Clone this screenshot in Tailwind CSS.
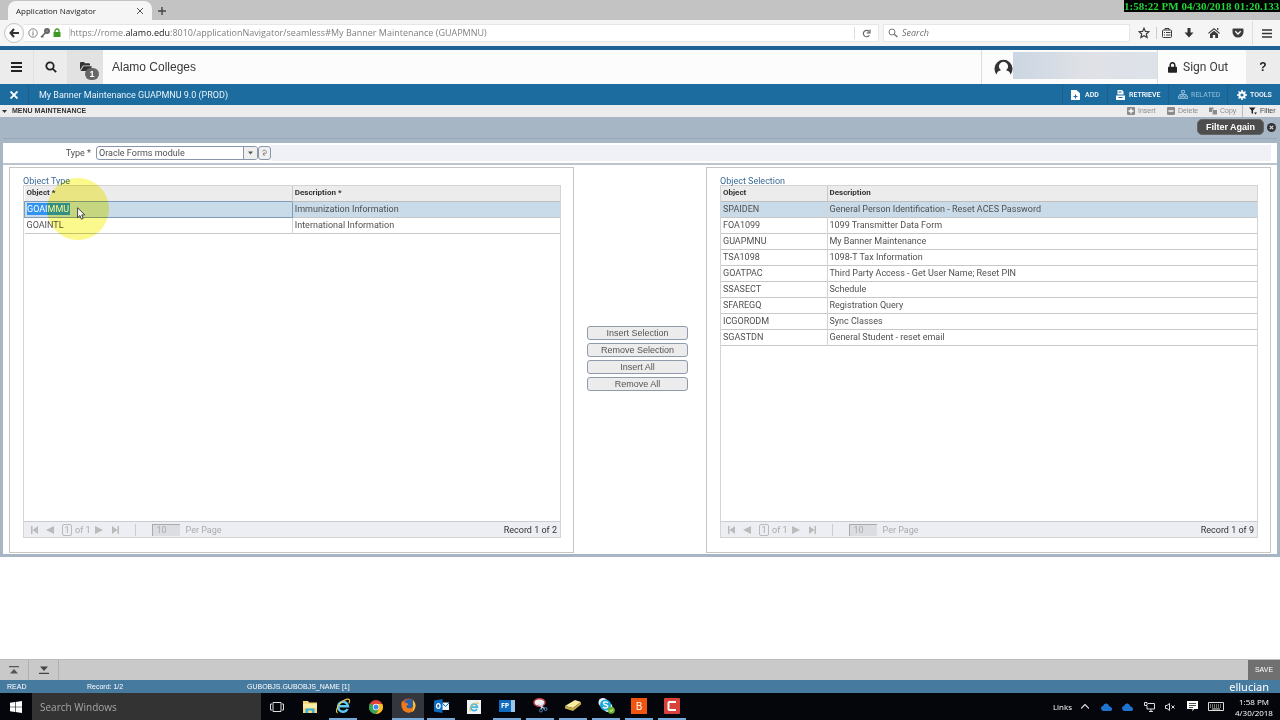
<!DOCTYPE html>
<html lang="en">
<head>
    <meta charset="UTF-8">
    <meta name="viewport" content="width=device-width, initial-scale=1.0">
    <title>Application Navigator</title>
    <script src="https://cdn.jsdelivr.net/npm/@tailwindcss/browser@4"></script>
</head>
<body class="min-h-screen flex flex-col bg-white font-['Liberation_Sans',Arial,sans-serif] text-[9px] leading-3 text-[#4a4a4a]">

    <!-- Browser tabs -->
    <div class="relative h-5 bg-[#c3c3c3] flex items-end font-['Open_Sans','Noto_Sans',sans-serif]">
        <div class="ml-2 h-[19px] w-[144px] bg-[#f5f5f5] rounded-t-lg flex items-center justify-between pl-2 pr-2 text-[8px] text-[#222]">
            <span>Application Navigator</span>
            <button aria-label="Close tab"><svg class="w-2 h-2" viewBox="0 0 8 8" stroke="#555" fill="none"><path d="M1 1l6 6M7 1L1 7"/></svg></button>
        </div>
        <button aria-label="New tab" class="ml-[6px] mb-[5px]"><svg class="w-2 h-2" viewBox="0 0 8 8" stroke="#444" stroke-width="1.4"><path d="M4 0v8M0 4h8"/></svg></button>
        <div class="absolute right-0 top-0 h-3 w-[156px] bg-black text-[#22d63a] font-bold text-[11px] leading-3 whitespace-nowrap font-['Liberation_Serif',serif]">1:58:22 PM 04/30/2018 01:20.133</div>
    </div>

    <!-- Address bar -->
    <div class="h-[26px] bg-[#f5f5f5] flex items-center font-['Open_Sans','Noto_Sans',sans-serif] text-[#808080]">
        <button aria-label="Back" class="ml-1 w-5 h-5 rounded-full border border-[#c4c4c4] bg-[#fbfbfb] flex items-center justify-center shrink-0">
            <svg class="w-[10px] h-[10px]" viewBox="0 0 10 10" fill="none" stroke="#333" stroke-width="2"><path d="M5 1L1.500 5L5 9M2 5h8"/></svg>
        </button>
        <div class="flex-1 h-[18px] bg-white border-y border-r border-[#e6e6e6] flex items-center">
            <svg class="ml-1 w-[10px] h-[10px]" viewBox="0 0 10 10" fill="none" stroke="#777" stroke-width=".9"><circle cx="5" cy="5" r="4.200"/><path d="M5 4.300v3.200M5 2.400v1" stroke-width="1.100"/></svg>
            <svg class="ml-[2px] w-[10px] h-[10px]" viewBox="0 0 10 10" fill="none" stroke="#666"><circle cx="7" cy="3" r="1.800" stroke-width="2.400"/><path d="M5.600 4.600L1 9.200M2 8l1.400 1.200" stroke-width="1.500"/></svg>
            <svg class="ml-[3px] w-2 h-[10px]" viewBox="0 0 8 10"><path d="M2 4.500V3a2 2 0 0 1 4 0v1.500" fill="none" stroke="#3f9a22" stroke-width="1.300"/><rect x=".5" y="4" width="7" height="5" rx=".5" fill="#3f9a22"/></svg>
            <span class="ml-2 h-3 border-l border-[#ddd]"></span>
            <input aria-label="Address" class="sr-only" value="https://rome.alamo.edu:8010/applicationNavigator/seamless#My Banner Maintenance (GUAPMNU)">
            <span class="flex-1 text-[9px] whitespace-nowrap">https://rome.<span class="text-[#222]">alamo.edu</span>:8010/applicationNavigator/seamless#My Banner Maintenance (GUAPMNU)</span>
            <button aria-label="Reload" class="h-3 w-6 border-l border-[#ddd] flex items-center justify-center">
                <svg class="w-[9px] h-[9px]" viewBox="0 0 9 9" fill="none" stroke="#666" stroke-width="1.200"><path d="M7.300 6.200A3.200 3.200 0 1 1 7 2.500"/><path d="M8 .5v3.300H4.800"/></svg>
            </button>
        </div>
        <label class="ml-1 w-[247px] h-[18px] bg-white border border-[#e6e6e6] flex items-center gap-1 pl-1">
            <svg class="w-[10px] h-[10px]" viewBox="0 0 10 10" fill="none" stroke="#777"><circle cx="4" cy="4" r="3"/><path d="M6.200 6.200L9.500 9" stroke-width="1.500"/></svg>
            <input placeholder="Search" aria-label="Search" class="w-40 text-[9px] italic outline-none placeholder:text-[#6f6f6f]">
        </label>
        <div class="flex items-center ml-2">
            <button aria-label="Bookmark" class="w-4 mr-[2px]"><svg class="w-3 h-3" viewBox="0 0 12 12" fill="none" stroke="#3b3b3b" stroke-width="1.200"><path d="M6 1.200l1.400 3.200 3.500.3-2.600 2.300.8 3.500L6 8.700l-3.100 1.800.8-3.500L1.100 4.700l3.500-.3z"/></svg></button>
            <button aria-label="Library" class="w-5 pl-1 border-l border-[#ccc]"><svg class="w-3 h-3" viewBox="0 0 12 12" fill="none" stroke="#3b3b3b"><rect x="1.500" y="3" width="9" height="7.500" rx="1"/><path d="M4 3V1.500h4V3M3 5.500h1M5 5.500h4.500M3 8h1M5 8h4.500"/></svg></button>
            <button aria-label="Downloads" class="w-[26px] pl-2"><svg class="w-[10px] h-[10px]" viewBox="0 0 10 10" fill="#333"><path d="M3.500 0h3v4.500H9.500L5 9.500.5 4.500h3z"/></svg></button>
            <button aria-label="Home" class="w-6 pl-[6px]"><svg class="w-3 h-[10px]" viewBox="0 0 12 10" fill="#3b3b3b"><path d="M6 0l6 5-.7.800L6 1.600.7 5.800 0 5zM2 6l4-3.200L10 6v4H7.200V7H4.800v3H2zM9 0h1.300v2.500L9 1.500z"/></svg></button>
            <button aria-label="Pocket" class="w-[26px] pl-[6px]"><svg class="w-3 h-[10px]" viewBox="0 0 12 10"><path d="M1.500.5h9q1 0 1 1V4a5.500 5.500 0 0 1-11 0V1.500q0-1 1-1z" fill="#3b3b3b"/><path d="M3.300 3.300L6 6l2.700-2.700" fill="none" stroke="#fff" stroke-width="1.300"/></svg></button>
            <button aria-label="Open menu" class="h-6 w-7 border-l border-[#ddd] flex items-center justify-center"><svg class="w-[10px] h-[9px]" viewBox="0 0 10 9" stroke="#333" stroke-width="1.500"><path d="M0 1h10M0 4.500h10M0 8h10"/></svg></button>
        </div>
    </div>

    <!-- Application header -->
    <header class="h-[38px] border-t-4 border-[#1f6296] bg-[#fcfcfc] flex items-stretch text-[#3a3a3a]">
        <button aria-label="Menu" class="w-[34px] bg-[#ececec] border-r border-[#e0e0e0] flex items-center justify-center"><svg class="w-[11px] h-[10px]" viewBox="0 0 11 10" stroke="#222" stroke-width="2"><path d="M0 1h11M0 5h11M0 9h11"/></svg></button>
        <button aria-label="Search" class="w-[34px] bg-[#ececec] border-r border-[#e0e0e0] flex items-center justify-center"><svg class="w-3 h-3" viewBox="0 0 12 12" fill="none" stroke="#222" stroke-width="1.800"><circle cx="5" cy="5" r="3.700"/><path d="M7.800 7.800l3.400 3.400"/></svg></button>
        <button aria-label="Open items" class="relative w-[35px] bg-[#e2e2e2] flex items-center justify-center">
            <svg class="w-3 h-[10px]" viewBox="0 0 12 10" fill="#333"><path d="M0 1q0-1 1-1h3l1 1.300h4q1 0 1 1V3.500H3L0 8zM3.500 4.300H12L9.500 9H.6z"/></svg>
            <span class="absolute left-[17px] top-[18px] w-[14px] h-3 rounded-full bg-[#666] text-white font-bold text-[9px] leading-3 text-center">1</span>
        </button>
        <h1 class="ml-[9px] flex-1 self-center text-[12px] leading-4">Alamo Colleges</h1>
        <div class="border-l border-[#ddd] flex pl-3">
            <svg class="self-center w-[19px] h-4" viewBox="0 0 19 16"><path d="M2.500 15.500A9 9 0 1 1 16.500 15.500L15.500 13Q14.500 11.800 12 11.300A4.600 4.600 0 1 0 7 11.300Q4.500 11.800 3.500 13z" fill="#333"/></svg>
            <div class="mt-[2px] w-[144px] h-[27px] bg-linear-to-r from-[#cbd6e2] via-[#dfe1e6] to-[#dde2e9]"></div>
        </div>
        <button class="w-[89px] border-l border-[#ddd] flex items-center pl-[10px] gap-[6px] text-[12px] font-['Roboto',sans-serif]">
            <svg class="w-[9px] h-[11px]" viewBox="0 0 9 11"><path d="M2.200 5V3a2.300 2.300 0 0 1 4.600 0v2" fill="none" stroke="#222" stroke-width="1.500"/><rect y="4.800" width="9" height="6" rx=".7" fill="#222"/></svg>
            Sign Out
        </button>
        <button aria-label="Help" class="w-[34px] bg-[#ececec] text-[12px] font-bold text-[#222]">?</button>
    </header>

    <!-- Page title bar -->
    <div class="h-[21px] bg-[#1d6c9f] flex items-stretch text-white font-['Roboto',sans-serif]">
        <button aria-label="Close page" class="w-[29px] border-r border-[#19608f] flex items-center justify-center"><svg class="w-2 h-2" viewBox="0 0 8 8" stroke="#fff" stroke-width="1.900"><path d="M.5.5l7 7M7.500.5l-7 7"/></svg></button>
        <h2 class="ml-[10px] flex-1 self-center text-[9px] text-[#e9f2f8]">My Banner Maintenance GUAPMNU 9.0 (PROD)</h2>
        <div class="flex text-[7px] font-medium">
            <button class="w-[45px] border-l border-[#19608f] flex items-center pl-2 gap-[5px]"><svg class="w-[9px] h-[10px]" viewBox="0 0 9 10"><path d="M0 0h5.500L9 3.300V10H0z" fill="#fff"/><path d="M4.500 4.500v4M2.500 6.500h4" stroke="#1d6c9f" stroke-width="1.100"/></svg>ADD</button>
            <button class="w-[61px] border-l border-[#19608f] flex items-center pl-2 gap-1"><svg class="w-[9px] h-[10px]" viewBox="0 0 9 10" fill="#fff"><path d="M1.500 0h4.500l1.500 1.500V4.500h-6zM0 5.500h9V10H0z"/><path d="M2.500 2h3M2.500 7.500h4" stroke="#1d6c9f"/></svg>RETRIEVE</button>
            <button disabled class="w-[59px] border-l border-[#19608f] flex items-center pl-[9px] gap-[3px] text-[#7fb0d0]"><svg class="w-[10px] h-[9px]" viewBox="0 0 10 9" fill="none" stroke="#8fbad6"><path d="M3.500.5h3v2.500h-3zM.5 6h2.500v2.500H.5zM7 6h2.500v2.500H7zM3.800 6h2.400v2.500H3.800zM5 3v3M1.700 6V4.500h6.600V6"/></svg>RELATED</button>
            <button class="w-[53px] border-l border-[#19608f] flex items-center pl-[9px] gap-[3px]"><svg class="w-[10px] h-[10px]" viewBox="0 0 10 10" fill="none" stroke="#fff"><circle cx="5" cy="5" r="2.600" stroke-width="2"/><path d="M5 0v2M5 8v2M0 5h2M8 5h2M1.500 1.500l1.300 1.300M7.200 7.200l1.300 1.300M8.500 1.500L7.200 2.800M2.800 7.200L1.500 8.500" stroke-width="1.500"/></svg>TOOLS</button>
        </div>
    </div>

    <!-- Block toolbar -->
    <div class="h-3 bg-[#ececec] flex items-center text-[7px] text-[#8c8c8c]">
        <svg class="ml-[2px] w-[5px] h-[3px]" viewBox="0 0 5 3"><path d="M0 0h5L2.500 3z" fill="#333"/></svg>
        <h3 class="ml-[5px] flex-1 font-bold text-[#333]">MENU MAINTENANCE</h3>
        <button disabled class="w-10 flex items-center gap-[3px]"><svg class="w-2 h-2" viewBox="0 0 8 8"><rect width="8" height="8" rx="1" fill="#8c8c8c"/><path d="M4 1.500v5M1.500 4h5" stroke="#fff" stroke-width="1.400"/></svg>Insert</button>
        <button disabled class="w-[42px] flex items-center gap-[3px]"><svg class="w-2 h-2" viewBox="0 0 8 8"><rect width="8" height="8" rx="1" fill="#8c8c8c"/><path d="M1.500 4h5" stroke="#fff" stroke-width="1.400"/></svg>Delete</button>
        <button disabled class="w-[33px] flex items-center gap-[3px]"><svg class="w-2 h-2" viewBox="0 0 8 8" fill="#8c8c8c"><path d="M0 .5h4.500V2.500H3V5H0zM3.600 3H8v4.500H3.600z"/></svg>Copy</button>
        <button class="w-[38px] border-l border-[#bbb] pl-[6px] flex items-center gap-[3px] text-[#444]"><svg class="w-2 h-2" viewBox="0 0 8 8" fill="#222"><path d="M0 .5h6.500L4 3.500V7L2.500 6V3.500zM5 5.500h3L6.500 7.500z"/></svg>Filter</button>
    </div>

    <main class="bg-[#a7b6c5] px-[3px] pb-[3px] font-['Roboto',sans-serif] text-[#505050]">
        <div class="h-[22px] border-b border-[#94a6b8] flex items-center justify-end gap-[3px] pr-[1px]">
            <button class="h-4 w-[67px] mb-[1px] rounded-[5px] bg-[#4d4d4d] border border-[#666] text-white font-bold text-[9px] font-['Liberation_Sans',Arial,sans-serif]">Filter Again</button>
            <button aria-label="Close filter"><svg class="w-[9px] h-[9px]" viewBox="0 0 9 9"><circle cx="4.500" cy="4.500" r="4.500" fill="#333"/><path d="M2.800 2.800l3.400 3.400M6.200 2.800L2.800 6.200" stroke="#dde" stroke-width="1.200"/></svg></button>
        </div>

        <!-- Object type filter -->
        <div class="mt-1 h-5 bg-white flex items-center pr-[6px]">
            <label for="type" class="w-[93px] pr-[5px] text-right text-[9px]">Type *</label>
            <div class="relative">
                <select id="type" class="appearance-none w-[162px] h-[14px] pl-[2px] bg-white border border-[#8796a8] rounded-[3px] text-[9px] leading-3 text-[#505050]">
                    <option>Oracle Forms module</option>
                    <option>Menu</option>
                </select>
                <svg class="absolute right-0 top-0 w-[15px] h-[14px] pointer-events-none" viewBox="0 0 15 14"><path d="M.5 1H12q2 0 2 2v8q0 2-2 2H.5z" fill="#efefef"/><path d="M.5 1v12" stroke="#8796a8"/><path d="M5 5.500h5L7.500 8.500z" fill="#555"/></svg>
            </div>
            <button aria-label="Clear type" class="w-[13px] h-[14px] border border-[#8796a8] rounded-[3px] bg-[#f0f0f0] flex items-center justify-center"><svg class="w-[7px] h-[8px]" viewBox="0 0 7 8" fill="none" stroke="#888"><path d="M1.500 2.500A2 2 0 1 1 4.500 4.800L2 5M3.500 3.300L2 5l1.500 2"/></svg></button>
            <div class="flex-1 h-[16px] bg-[#eff1f6]"></div>
        </div>

        <div class="border-t-2 border-[#bcc4cf] bg-white pt-[2px] px-[6px] pb-[1px] flex text-[9px]">
            <!-- Available objects -->
            <section class="flex-1 border border-[#c6c6c6] pt-2 pl-[13px] pr-3 pb-[14px]">
                <h4 class="h-[9px] leading-[10px] text-[#3a6a96]">Object Type</h4>
                <div class="relative border border-[#d4d4d4] min-h-[353px] flex flex-col">
                    <table class="w-full table-fixed border-collapse">
                        <thead>
                            <tr class="h-[15px] bg-[#ececec] text-left text-[8px] text-[#333] border-b border-[#bdbdbd]">
                                <th class="w-1/2 pl-[2px] border-r border-[#c8c8c8]">Object *</th>
                                <th class="pl-[2px]">Description *</th>
                            </tr>
                        </thead>
                        <tbody>
                            <tr class="h-4 bg-[#c9dbe8] border-b border-[#c8c8c8]">
                                <td class="border border-[#7f9cba] p-0"><input aria-label="Object" value="GOAIMMU" class="block ml-[2px] w-[43px] h-3 bg-[#3393f3] text-white outline-none"></td>
                                <td class="pl-[2px]">Immunization Information</td>
                            </tr>
                            <tr class="h-4 border-b border-[#c8c8c8]">
                                <td class="pl-[2px] border-r border-[#d4d4d4]">GOAINTL</td>
                                <td class="pl-[2px]">International Information</td>
                            </tr>
                        </tbody>
                    </table>
                    <div class="mt-auto h-4 bg-[#eceef3] border-t border-[#c9ccd2] flex items-center text-[#aaa]">
                        <button disabled aria-label="First page" class="ml-[7px]"><svg class="w-2 h-2" viewBox="0 0 8 8" fill="#bbb"><path d="M0 0h1.500v8H0zM7 0v8L1.500 4z"/></svg></button>
                        <button disabled aria-label="Previous page" class="ml-[7px]"><svg class="w-2 h-2" viewBox="0 0 8 8" fill="#bbb"><path d="M8 0v8L0 4z"/></svg></button>
                        <input disabled aria-label="Page" value="1" class="ml-2 w-[10px] h-3 border border-[#bbb] rounded-[2px] text-center">
                        <span class="ml-[3px]">of 1</span>
                        <button disabled aria-label="Next page" class="ml-1"><svg class="w-2 h-2" viewBox="0 0 8 8" fill="#bbb"><path d="M0 0v8L8 4z"/></svg></button>
                        <button disabled aria-label="Last page" class="ml-2"><svg class="w-2 h-2" viewBox="0 0 8 8" fill="#bbb"><path d="M6.500 0H8v8H6.500zM1 0v8l5.500-4z"/></svg></button>
                        <span class="ml-4 h-3 border-l border-[#ccc]"></span>
                        <select disabled id="per-left" class="ml-4 appearance-none w-7 h-3 pl-1 bg-[#dcdde2] border-l border-t border-[#aaa] leading-[10px] opacity-100"><option>10</option></select>
                        <label for="per-left" class="ml-[6px] flex-1">Per Page</label>
                        <span class="pr-[3px] text-[#333]">Record 1 of 2</span>
                    </div>
                    <!-- Pointer highlight -->
                    <div class="absolute left-[23px] top-[-8px] w-[62px] h-[62px] rounded-full bg-[#fbf88c] mix-blend-multiply pointer-events-none"></div>
                    <svg class="absolute left-[53px] top-[21px] w-[9px] h-[13px] pointer-events-none" viewBox="0 0 9 13"><path d="M.6.8v9.800l2.300-2.100 1.500 3.700 1.800-.8-1.500-3.500h3.100z" fill="#fff" stroke="#333" stroke-width=".9"/></svg>
                </div>
            </section>

            <!-- Transfer buttons -->
            <div class="w-[132px] flex flex-col gap-[3px] pt-[159px] pl-[13px] text-[#555] font-['Liberation_Sans',Arial,sans-serif]">
                <button class="w-[101px] h-[14px] rounded-[3px] border border-[#8f9bab] bg-[#ececec]">Insert Selection</button>
                <button class="w-[101px] h-[14px] rounded-[3px] border border-[#8f9bab] bg-[#ececec]">Remove Selection</button>
                <button class="w-[101px] h-[14px] rounded-[3px] border border-[#8f9bab] bg-[#ececec]">Insert All</button>
                <button class="w-[101px] h-[14px] rounded-[3px] border border-[#8f9bab] bg-[#ececec]">Remove All</button>
            </div>

            <!-- Selected objects -->
            <section class="flex-1 border border-[#c6c6c6] pt-2 pl-[13px] pr-3 pb-[14px]">
                <h4 class="h-[9px] leading-[10px] text-[#3a6a96]">Object Selection</h4>
                <div class="border border-[#d4d4d4] min-h-[353px] flex flex-col">
                    <table class="w-full table-fixed border-collapse">
                        <thead>
                            <tr class="h-[15px] bg-[#ececec] text-left text-[8px] text-[#333] border-b border-[#bdbdbd]">
                                <th class="w-[106px] pl-[2px] border-r border-[#c8c8c8]">Object</th>
                                <th class="pl-[2px]">Description</th>
                            </tr>
                        </thead>
                        <tbody>
                            <tr class="h-4 border-b border-[#c8c8c8] bg-[#c9dbe8]"><td class="pl-[2px] border-r border-[#d4d4d4]">SPAIDEN</td><td class="pl-[2px]">General Person Identification - Reset ACES Password</td></tr>
                            <tr class="h-4 border-b border-[#c8c8c8]"><td class="pl-[2px] border-r border-[#d4d4d4]">FOA1099</td><td class="pl-[2px]">1099 Transmitter Data Form</td></tr>
                            <tr class="h-4 border-b border-[#c8c8c8]"><td class="pl-[2px] border-r border-[#d4d4d4]">GUAPMNU</td><td class="pl-[2px]">My Banner Maintenance</td></tr>
                            <tr class="h-4 border-b border-[#c8c8c8]"><td class="pl-[2px] border-r border-[#d4d4d4]">TSA1098</td><td class="pl-[2px]">1098-T Tax Information</td></tr>
                            <tr class="h-4 border-b border-[#c8c8c8]"><td class="pl-[2px] border-r border-[#d4d4d4]">GOATPAC</td><td class="pl-[2px]">Third Party Access - Get User Name; Reset PIN</td></tr>
                            <tr class="h-4 border-b border-[#c8c8c8]"><td class="pl-[2px] border-r border-[#d4d4d4]">SSASECT</td><td class="pl-[2px]">Schedule</td></tr>
                            <tr class="h-4 border-b border-[#c8c8c8]"><td class="pl-[2px] border-r border-[#d4d4d4]">SFAREGQ</td><td class="pl-[2px]">Registration Query</td></tr>
                            <tr class="h-4 border-b border-[#c8c8c8]"><td class="pl-[2px] border-r border-[#d4d4d4]">ICGORODM</td><td class="pl-[2px]">Sync Classes</td></tr>
                            <tr class="h-4 border-b border-[#c8c8c8]"><td class="pl-[2px] border-r border-[#d4d4d4]">SGASTDN</td><td class="pl-[2px]">General Student - reset email</td></tr>
                        </tbody>
                    </table>
                    <div class="mt-auto h-4 bg-[#eceef3] border-t border-[#c9ccd2] flex items-center text-[#aaa]">
                        <button disabled aria-label="First page" class="ml-[7px]"><svg class="w-2 h-2" viewBox="0 0 8 8" fill="#bbb"><path d="M0 0h1.500v8H0zM7 0v8L1.500 4z"/></svg></button>
                        <button disabled aria-label="Previous page" class="ml-[7px]"><svg class="w-2 h-2" viewBox="0 0 8 8" fill="#bbb"><path d="M8 0v8L0 4z"/></svg></button>
                        <input disabled aria-label="Page" value="1" class="ml-2 w-[10px] h-3 border border-[#bbb] rounded-[2px] text-center">
                        <span class="ml-[3px]">of 1</span>
                        <button disabled aria-label="Next page" class="ml-1"><svg class="w-2 h-2" viewBox="0 0 8 8" fill="#bbb"><path d="M0 0v8L8 4z"/></svg></button>
                        <button disabled aria-label="Last page" class="ml-2"><svg class="w-2 h-2" viewBox="0 0 8 8" fill="#bbb"><path d="M6.500 0H8v8H6.500zM1 0v8l5.500-4z"/></svg></button>
                        <span class="ml-4 h-3 border-l border-[#ccc]"></span>
                        <select disabled id="per-right" class="ml-4 appearance-none w-7 h-3 pl-1 bg-[#dcdde2] border-l border-t border-[#aaa] leading-[10px] opacity-100"><option>10</option></select>
                        <label for="per-right" class="ml-[6px] flex-1">Per Page</label>
                        <span class="pr-[3px] text-[#333]">Record 1 of 9</span>
                    </div>
                </div>
            </section>
        </div>
    </main>

    <!-- Section navigation and save -->
    <div class="mt-auto h-[21px] bg-[#c9c9c9] flex items-stretch border-t border-[#bcbcbc]">
        <button aria-label="Previous section" class="w-[29px] border-r border-[#b0b0b0] flex items-center justify-center"><svg class="w-[10px] h-2" viewBox="0 0 10 8" fill="#555"><path d="M0 0h10v1.200H0zM5 3l4 4.500H1z"/></svg></button>
        <button aria-label="Next section" class="w-[30px] border-r border-[#b0b0b0] flex items-center justify-center"><svg class="w-[10px] h-2" viewBox="0 0 10 8" fill="#444"><path d="M0 6.800h10V8H0zM1 .5h8L5 5z"/></svg></button>
        <button class="ml-auto w-8 bg-[#707070] text-white text-[7px]">SAVE</button>
    </div>
    <div class="h-[13px] bg-[#467a9f] flex items-center text-[7px] text-white pl-[7px] pr-[11px]">
        <span class="w-20">READ</span>
        <span class="w-40">Record: 1/2</span>
        <span class="flex-1">GUBOBJS.GUBOBJS_NAME [1]</span>
        <span class="text-[11px] font-['Noto_Sans',sans-serif]">ellucian</span>
    </div>

    <!-- Windows taskbar -->
    <footer class="h-[27px] bg-[#04060b] flex items-stretch text-white font-['Open_Sans','Noto_Sans',sans-serif]">
        <button aria-label="Start" class="w-8 flex items-center justify-center"><svg class="w-3 h-3" viewBox="0 0 12 12" fill="#fff"><path d="M0 1.700L5 1v4.700H0zM5.600.9L12 0v5.700H5.600zM0 6.300h5V11l-5-.7zM5.600 6.300H12V12l-6.400-.9z"/></svg></button>
        <input aria-label="Search Windows" placeholder="Search Windows" class="w-[229px] bg-[#333] pl-2 text-[10px] outline-none placeholder:text-[#a6a6a6]">
        <button aria-label="Task view" class="w-8 flex items-center justify-center"><svg class="w-[14px] h-[10px]" viewBox="0 0 14 10" fill="none" stroke="#ddd"><path d="M3 .5h8v9H3zM2 2H.5v6H2M12 2h1.500v6H12"/></svg></button>
        <button aria-label="File Explorer" class="w-[33px] flex items-center justify-center"><svg class="w-[14px] h-3" viewBox="0 0 14 12"><path d="M0 0h5l1 1.500h8V12H0z" fill="#f5d67b"/><path d="M0 3h14v4H0z" fill="#fbe9a6"/><path d="M2.500 12V7.500h9V12H9V9.500H5V12z" fill="#38b1dc"/></svg></button>
        <button aria-label="Internet Explorer" class="w-7 mx-[3px] flex items-center justify-center border-b-2 border-[#76a9db]"><svg class="w-4 h-4" viewBox="0 0 16 16" fill="none"><path d="M12.500 11A5 5 0 1 1 13 8.200H4" stroke="#5ccaf5" stroke-width="2.400"/><path d="M2.500 15C-1 13 5 3 12 1.200q4-.5 2 4" stroke="#f0c445" stroke-width="1.200"/></svg></button>
        <button aria-label="Chrome" class="w-8 flex items-center justify-center"><svg class="w-[14px] h-[14px]" viewBox="0 0 14 14"><circle cx="7" cy="7" r="7" fill="#e24335"/><path d="M7 7L.9 3.500A7 7 0 0 0 7 14l3-5z" fill="#34a853"/><path d="M7 14a7 7 0 0 0 6.300-10H7l3 5z" fill="#fbc116"/><circle cx="7" cy="7" r="3.200" fill="#fff"/><circle cx="7" cy="7" r="2.500" fill="#4285f4"/></svg></button>
        <button aria-label="Firefox" class="w-8 flex items-center justify-center bg-[#33363c] border-b-2 border-[#76a9db]"><svg class="w-[15px] h-[15px]" viewBox="0 0 15 15"><circle cx="7.500" cy="7.500" r="7" fill="#e8641b"/><circle cx="8" cy="6" r="5" fill="#2a5fa5"/><path d="M1 3q2 2 5 2l1.500 1.500L5 8q1 3 4.500 2.500Q13 9.500 12.500 5 16 9 12 13q-5 3.500-9.500-.5Q-.5 8 1 3z" fill="#ef7a1c"/><path d="M12 2q3.500 4 2 8-1 3-3 4 2-4 1-7z" fill="#fbc52c"/></svg></button>
        <button aria-label="Outlook" class="w-7 mx-[3px] flex items-center justify-center border-b-2 border-[#76a9db]"><svg class="w-[15px] h-[14px]" viewBox="0 0 15 14"><path d="M8 3.500h7v7.500H8z" fill="#eaf3fb"/><path d="M8 4l3.500 3.500L15 4" fill="none" stroke="#0a6cc0"/><path d="M0 1.500L8.500 0v14L0 12.500z" fill="#0a6cc0"/><ellipse cx="4.300" cy="7" rx="1.800" ry="2.400" fill="none" stroke="#fff" stroke-width="1.300"/></svg></button>
        <button aria-label="Web shortcut" class="w-8 flex items-center justify-center"><svg class="w-[14px] h-[14px]" viewBox="0 0 14 14" fill="none"><path d="M0 0h14v14H0z" fill="#eef3f4"/><path d="M10 9A3.300 3.300 0 1 1 10.400 7.200H4.500" stroke="#42b5e6" stroke-width="1.700"/><path d="M3 11.500Q1.500 8 6 4.500 11 1.500 11.500 4" stroke="#e6bd45"/></svg></button>
        <div class="ml-[3px] flex items-stretch gap-[5px]">
            <button class="w-7 flex items-center justify-center border-b-2 border-[#76a9db]"><span class="w-[16px] h-3 bg-[#0f6bc0] border-r-4 border-[#9cc5ea] text-[7px] leading-3 font-bold">FP</span></button>
            <button aria-label="Snipping Tool" class="w-7 flex items-center justify-center border-b-2 border-[#76a9db]"><svg class="w-[15px] h-[15px]" viewBox="0 0 15 15" fill="none"><ellipse cx="6.500" cy="4.500" rx="5.500" ry="3.700" fill="#f0f0f2" stroke="#cc4752" stroke-width="1.500"/><path d="M5 6l7 5M10 5l-2 6" stroke="#ccd3dc" stroke-width="1.300"/><circle cx="12.500" cy="11" r="1.500" stroke="#4c88bf"/><circle cx="8" cy="12.500" r="1.500" stroke="#4c88bf"/></svg></button>
            <button aria-label="Sticky Notes" class="w-7 flex items-center justify-center border-b-2 border-[#76a9db]"><svg class="w-[16px] h-[11px]" viewBox="0 0 16 11"><path d="M0 6L10 0l6 2-8 6z" fill="#f7eda0"/><path d="M0 6l8 2 8-6v2.500L8 11 0 8.500z" fill="#c7a94b"/></svg></button>
            <button aria-label="Skype" class="w-7 flex items-center justify-center border-b-2 border-[#76a9db]"><svg class="w-[17px] h-4" viewBox="0 0 17 16"><circle cx="5" cy="4.500" r="4.500" fill="#e9f6fc"/><circle cx="10" cy="9.500" r="4.500" fill="#e9f6fc"/><circle cx="7.500" cy="7" r="5.500" fill="#1ba8e0"/><path d="M10 4.800Q8.500 3.500 6.500 4q-2 1 0 2.500l2 .6q2.500 1.400 0 2.800-2 .5-3.500-.9" fill="none" stroke="#fff" stroke-width="1.400"/><circle cx="13.300" cy="12.300" r="3.500" fill="#6cb52d"/><path d="M11.800 12.300l1.200 1.200 2-2.200" fill="none" stroke="#fff"/></svg></button>
            <button class="w-7 flex items-center justify-center border-b-2 border-[#76a9db]"><span class="w-4 h-4 bg-[#f0560f] text-[10px] leading-4">B</span></button>
            <button aria-label="Camtasia" class="w-7 flex items-center justify-center border-b-2 border-[#76a9db]"><svg class="w-4 h-4" viewBox="0 0 16 16"><rect width="16" height="16" rx="1" fill="#d8423b"/><path d="M12 4H5.500Q4.500 4 4.500 5v6q0 1 1 1H12" fill="none" stroke="#fff" stroke-width="2"/></svg></button>
        </div>
        <div class="ml-auto flex items-center text-[8px]">
            <span class="mr-[9px]">Links</span>
            <svg class="w-2 h-[5px] mr-3" viewBox="0 0 8 5" fill="none" stroke="#ddd" stroke-width="1.200"><path d="M0 4.500l4-4 4 4"/></svg>
            <svg class="w-[11px] h-2 mr-[10px]" viewBox="0 0 11 8" fill="#1f74cf"><path d="M0 5q0-2 2-2Q3 0 5.500.5T8 3l2.500 1.500Q12 7 9.500 8H2Q0 7.500 0 5z"/></svg>
            <svg class="w-[11px] h-2 mr-[11px]" viewBox="0 0 11 8" fill="#1f74cf"><path d="M0 5q0-2 2-2Q3 0 5.500.5T8 3l2.500 1.500Q12 7 9.500 8H2Q0 7.500 0 5z"/></svg>
            <svg class="w-[11px] h-[10px] mr-[10px]" viewBox="0 0 11 10" fill="none" stroke="#ddd"><path d="M4 1.500h6.500v5.500H3V4M5 9.500h4M7 7v2M.5 .5h2.500v3H.5z"/></svg>
            <svg class="w-[10px] h-2 mr-3" viewBox="0 0 10 8" fill="none" stroke="#ddd"><path d="M.5 2.500h1.500L4.500.5v7L2 5.500H.5zM6.500 2.500l3 3M9.500 2.500l-3 3"/></svg>
            <svg class="w-[11px] h-[11px] mr-[10px]" viewBox="0 0 11 11"><path d="M0 0h11v8H7L5.500 10.500V8H0z" fill="#fff"/><path d="M2 2.500h7M2 4.500h7M2 6.500h4" stroke="#222" stroke-width=".8"/></svg>
            <svg class="w-[16px] h-[9px] mr-2" viewBox="0 0 16 9" fill="none" stroke="#ddd"><path d="M.5.5h15v8H.5z"/><path d="M2 3h12M2 5h12" stroke-dasharray="1 1"/><path d="M4 7h8"/></svg>
            <div class="w-11 mr-1 text-[8px] leading-[11px] text-center">1:58 PM<br>4/30/2018</div>
        </div>
    </footer>
</body>
</html>
